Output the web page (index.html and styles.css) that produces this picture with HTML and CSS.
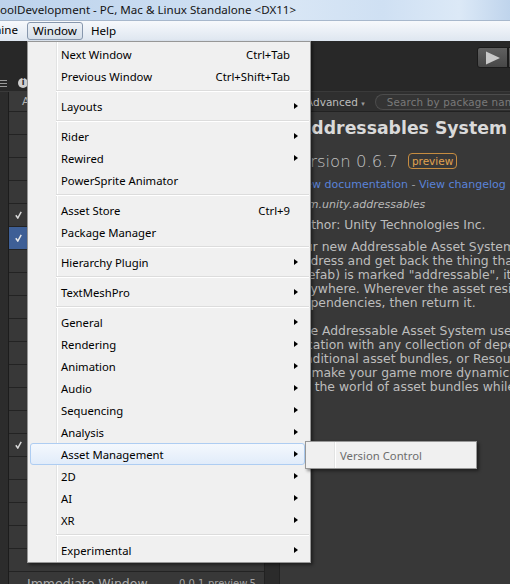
FILE: index.html
```html
<!DOCTYPE html>
<html lang="en">
<head>
<meta charset="utf-8">
<title>Unity - Window menu</title>
<link rel="stylesheet" href="styles.css">
</head>
<body>
<div class="screen">
  <header class="titlebar">oolDevelopment - PC, Mac &amp; Linux Standalone &lt;DX11&gt;</header>
  <nav class="menubar">
    <span class="mb-item first"><span>hine</span></span>
    <span class="mb-item open">Window</span>
    <span class="mb-item help">Help</span>
  </nav>
  <div class="editor">
    <div class="toolbar">
      <div class="transport">
        <span class="tbtn play"><svg width="16" height="14" viewBox="0 0 16 14"><polygon points="1,0.5 15,7 1,13.5" fill="#c9c9c9"/></svg></span>
        <span class="tbtn pause"></span>
      </div>
    </div>
    <div class="tabstrip">
      <svg class="ico-lines" width="7" height="7" viewBox="0 0 7 7"><rect x="0" y="0" width="7" height="1" fill="#9a9a9a"/><rect x="0" y="3" width="7" height="1" fill="#9a9a9a"/><rect x="0" y="6" width="7" height="1" fill="#9a9a9a"/></svg>
      <span class="ico-info">i</span>
    </div>
    <div class="pm">
      <div class="pm-gutter"></div>
      <div class="pm-list">
        <div class="list-head">All</div>
        <div class="row"></div>
        <div class="row"></div>
        <div class="row"></div>
        <div class="row"></div>
        <div class="row"><svg class="check" width="7" height="8" viewBox="0 0 7 8"><path d="M0.8 4.2 L2.8 7 L6.2 0.8" fill="none" stroke="#d8d8d8" stroke-width="1.5"/></svg></div>
        <div class="row selected"><svg class="check" width="7" height="8" viewBox="0 0 7 8"><path d="M0.8 4.2 L2.8 7 L6.2 0.8" fill="none" stroke="#e8e8e8" stroke-width="1.5"/></svg></div>
        <div class="row"></div>
        <div class="row"></div>
        <div class="row"></div>
        <div class="row"></div>
        <div class="row"></div>
        <div class="row"></div>
        <div class="row"></div>
        <div class="row"></div>
        <div class="row"><svg class="check" width="7" height="8" viewBox="0 0 7 8"><path d="M0.8 4.2 L2.8 7 L6.2 0.8" fill="none" stroke="#d8d8d8" stroke-width="1.5"/></svg></div>
        <div class="row"></div>
        <div class="row"></div>
        <div class="row"></div>
        <div class="row"></div>
        <div class="row"></div>
        <div class="row"><span class="pkg-name">Immediate Window</span><span class="pkg-ver">0.0.1-preview.5</span></div>
      </div>
      <div class="pm-split"></div>
      <div class="pm-detail">
        <div class="detail-head">
          <span class="adv">Advanced <span class="caret">&#9662;</span></span>
          <span class="search">
            <svg width="8" height="8" viewBox="0 0 8 8"><circle cx="3.2" cy="3.2" r="2.4" fill="none" stroke="#7c7c7c" stroke-width="1"/><path d="M5 5 L7.5 7.5" stroke="#7c7c7c" stroke-width="1.3"/></svg>
            <span class="ph">Search by package name</span>
          </span>
        </div>
        <div class="detail">
          <div class="d-title">Addressables System</div>
          <div class="d-version"><span class="ver">Version 0.6.7</span><span class="badge">preview</span></div>
          <div class="d-links"><span class="lnk">View documentation</span> - <span class="lnk">View changelog</span></div>
          <div class="d-id">com.unity.addressables</div>
          <div class="d-author">Author: Unity Technologies Inc.</div>
          <div class="d-desc">
            <div>Our new Addressable Asset System lets you load assets by</div>
            <div>address and get back the thing that you asked for. Once an asset</div>
            <div>prefab) is marked "addressable", it can be loaded from</div>
            <div>anywhere. Wherever the asset resides, the system will locate it and its</div>
            <div>dependencies, then return it.</div>
            <div class="gap"></div>
            <div>The Addressable Asset System uses asynchronous loading from any</div>
            <div>location with any collection of dependencies. Whether you use</div>
            <div>traditional asset bundles, or Resource folders, addressables help you</div>
            <div>to make your game more dynamic. Addressables simultaneously open</div>
            <div>up the world of asset bundles while managing all the complexity.</div>
          </div>
        </div>
      </div>
    </div>
  </div>

  <div class="menu">
    <div class="item"><span class="label">Next Window</span><span class="key">Ctrl+Tab</span><span class="sub"></span></div>
    <div class="item"><span class="label">Previous Window</span><span class="key">Ctrl+Shift+Tab</span><span class="sub"></span></div>
    <div class="sep"></div>
    <div class="item"><span class="label">Layouts</span><span class="sub arrow"></span></div>
    <div class="sep"></div>
    <div class="item"><span class="label">Rider</span><span class="sub arrow"></span></div>
    <div class="item"><span class="label">Rewired</span><span class="sub arrow"></span></div>
    <div class="item"><span class="label">PowerSprite Animator</span><span class="sub"></span></div>
    <div class="sep"></div>
    <div class="item"><span class="label">Asset Store</span><span class="key">Ctrl+9</span><span class="sub"></span></div>
    <div class="item"><span class="label">Package Manager</span><span class="sub"></span></div>
    <div class="sep"></div>
    <div class="item"><span class="label">Hierarchy Plugin</span><span class="sub arrow"></span></div>
    <div class="sep"></div>
    <div class="item"><span class="label">TextMeshPro</span><span class="sub arrow"></span></div>
    <div class="sep"></div>
    <div class="item"><span class="label">General</span><span class="sub arrow"></span></div>
    <div class="item"><span class="label">Rendering</span><span class="sub arrow"></span></div>
    <div class="item"><span class="label">Animation</span><span class="sub arrow"></span></div>
    <div class="item"><span class="label">Audio</span><span class="sub arrow"></span></div>
    <div class="item"><span class="label">Sequencing</span><span class="sub arrow"></span></div>
    <div class="item"><span class="label">Analysis</span><span class="sub arrow"></span></div>
    <div class="item hot"><span class="label">Asset Management</span><span class="sub arrow"></span></div>
    <div class="item"><span class="label">2D</span><span class="sub arrow"></span></div>
    <div class="item"><span class="label">AI</span><span class="sub arrow"></span></div>
    <div class="item"><span class="label">XR</span><span class="sub arrow"></span></div>
    <div class="sep"></div>
    <div class="item"><span class="label">Experimental</span><span class="sub arrow"></span></div>
  </div>

  <div class="submenu">
    <div class="item disabled"><span class="label">Version Control</span></div>
  </div>
</div>
</body>
</html>
```

FILE: styles.css
```css
* { box-sizing: border-box; }
html, body { margin: 0; padding: 0; }
body { background: #383838; }

.screen {
  position: relative;
  width: 510px;
  height: 584px;
  overflow: hidden;
  font-family: "Noto Sans", "DejaVu Sans", sans-serif;
}

/* ---------- Windows chrome ---------- */
.titlebar {
  height: 21px;
  font-size: 11.6px;
  line-height: 20px;
  color: #141414;
  white-space: nowrap;
  background: linear-gradient(90deg, #bdd3ec 0%, #c8dbf0 30%, #d8e6f5 58%, #cfe0f3 75%, #dce9f7 90%, #bfd4ec 100%);
  border-bottom: 1px solid #a8b8cc;
}

.menubar {
  height: 20px;
  display: flex;
  align-items: center;
  font-size: 11.6px;
  color: #000;
  background: linear-gradient(#f7f9fc, #dee6f0);
  white-space: nowrap;
}
.mb-item {
  height: 18px;
  line-height: 16px;
  padding: 0 5px;
  border: 1px solid transparent;
  border-radius: 3px;
}
.mb-item.first {
  width: 27px;
  display: flex;
  justify-content: flex-end;
  padding: 0 9px 0 0;
  border: 0;
}
.mb-item.open {
  background: linear-gradient(#eef2f7, #d5dee9);
  border-color: #8797ad;
}
.mb-item.help { margin-left: 2px; }

/* ---------- Unity editor ---------- */
.editor {
  height: 543px;
  display: flex;
  flex-direction: column;
  background: #282828;
  font-family: "DejaVu Sans", sans-serif;
}
.toolbar {
  height: 34px;
  display: flex;
  justify-content: flex-end;
  align-items: flex-start;
  padding-top: 6px;
}
.transport { display: flex; }
.tbtn {
  height: 21px;
  display: flex;
  align-items: center;
  justify-content: center;
  border: 1px solid #1b1b1b;
  background: linear-gradient(#606060, #474747);
}
.tbtn.play { width: 31px; border-radius: 3px 0 0 3px; }
.tbtn.pause { width: 2px; border-right: 0; }

.tabstrip {
  height: 17px;
  display: flex;
  align-items: center;
  background: #282828;
  border-bottom: 1px solid #3a3a3a;
}
.ico-lines { margin-left: 0; }
.ico-info {
  margin-left: 11px;
  width: 10px;
  height: 10px;
  border-radius: 50%;
  background: #cfcfcf;
  color: #2a2a2a;
  font: bold 8px/10px "DejaVu Sans", sans-serif;
  text-align: center;
}

.pm {
  flex: 1;
  display: grid;
  grid-template-columns: 9px 255px 16px 230px;
  overflow: hidden;
}
.pm-gutter {
  background: #2c2c2c;
  border-right: 1px solid #1c1c1c;
}
.pm-list {
  background: #383838;
  overflow: hidden;
}
.list-head {
  height: 20px;
  padding-left: 13px;
  font-size: 11px;
  line-height: 19px;
  color: #b4b4b4;
  background: #3a3a3a;
  border-bottom: 1px solid #232323;
}
.row {
  height: 23px;
  display: flex;
  align-items: center;
  padding: 0 8px 0 0;
  border-bottom: 1px solid #232323;
  white-space: nowrap;
}
.row.selected { background: #3e5f96; }
.check { margin-left: 6px; }
.pkg-name {
  margin-left: 18px;
  flex: 1;
  font-size: 12.5px;
  color: #acacac;
}
.pkg-ver {
  font-size: 10px;
  color: #a4a4a4;
}
.pm-split {
  background: #2b2b2b;
  border-left: 1px solid #222;
  border-right: 1px solid #222;
}
.pm-detail {
  background: #383838;
  overflow: hidden;
}
.detail-head {
  height: 20px;
  display: flex;
  align-items: center;
  padding-left: 26px;
  background: #2f2f2f;
  border-bottom: 1px solid #222;
  white-space: nowrap;
}
.adv { font-size: 10.5px; color: #bdbdbd; }
.caret { font-size: 7px; color: #9a9a9a; }
.search {
  margin-left: 10px;
  height: 16px;
  flex: 1;
  display: flex;
  align-items: center;
  gap: 5px;
  padding-left: 6px;
  border: 1px solid #4c4c4c;
  border-right: 0;
  border-radius: 8px 0 0 8px;
  background: #343434;
  overflow: hidden;
}
.ph { font-size: 10.3px; letter-spacing: 0.2px; color: #7a7a7a; }

.detail {
  padding: 5px 0 0 15px;
  color: #bdbdbd;
  white-space: nowrap;
}
.d-title {
  margin-left: 3px;
  font-size: 17.3px;
  font-weight: bold;
  line-height: 22px;
  color: #dadada;
}
.d-version {
  margin-top: 10px;
  margin-left: -5px;
  height: 24px;
  display: flex;
  align-items: center;
}
.ver {
  font-size: 16.5px;
  font-weight: 200;
  color: #c0c0c0;
}
.badge {
  margin-left: 10px;
  height: 16px;
  padding: 0 3px;
  border: 1px solid #c68c40;
  border-radius: 4px;
  font-size: 10.5px;
  line-height: 14px;
  color: #e0a24f;
}
.d-links {
  margin-top: 4px;
  font-size: 11px;
  line-height: 16px;
  color: #a0a0a0;
}
.lnk { color: #5a83d8; }
.d-id {
  margin-top: 4px;
  font-size: 11px;
  line-height: 16px;
  font-style: italic;
  color: #b8b8b8;
}
.d-author {
  margin-top: 4px;
  font-size: 12.3px;
  line-height: 16px;
}
.d-desc {
  margin-top: 7px;
  font-size: 12.4px;
  line-height: 14px;
}
.d-desc .gap { height: 14px; }

/* ---------- Popup menus ---------- */
.menu, .submenu {
  position: absolute;
  background: #f0f0f0;
  border: 1px solid #979797;
  box-shadow: 2px 2px 3px rgba(0, 0, 0, 0.45);
  font-family: "Noto Sans", sans-serif;
  font-size: 11.3px;
  color: #000;
  white-space: nowrap;
}
.menu {
  left: 27px;
  top: 41px;
  width: 284px;
  padding: 1px 5px 1px 2px;
  z-index: 5;
}
.submenu {
  left: 305px;
  top: 441px;
  width: 172px;
  padding: 2px;
  z-index: 6;
}
.menu::before, .submenu::before {
  content: "";
  position: absolute;
  top: 0;
  bottom: 0;
  left: 28px;
  width: 1px;
  background: #e2e3e3;
}
.menu::after, .submenu::after {
  content: "";
  position: absolute;
  top: 0;
  bottom: 0;
  left: 29px;
  width: 1px;
  background: #ffffff;
}
.item {
  position: relative;
  z-index: 1;
  height: 22px;
  display: flex;
  align-items: center;
  padding-left: 30px;
  border: 1px solid transparent;
  border-radius: 3px;
}
.submenu .item { padding-left: 31px; }
.label { flex: 1; }
.key { text-align: right; }
.sub {
  width: 14px;
  display: flex;
  align-items: center;
}
.sub.arrow::before {
  content: "";
  margin-left: 4px;
  width: 0;
  height: 0;
  border-left: 4px solid #000;
  border-top: 3.5px solid transparent;
  border-bottom: 3.5px solid transparent;
}
.item.hot {
  background: linear-gradient(#f4f8fd, #e1ecfa);
  border-color: #aecdf2;
}
.item.disabled { color: #6d6d6d; }
.sep {
  position: relative;
  z-index: 1;
  height: 8px;
  margin: 0 -4px 0 26px;
  padding-top: 3px;
}
.sep::before {
  content: "";
  display: block;
  border-top: 1px solid #dcdcdc;
  border-bottom: 1px solid #ffffff;
}
```
